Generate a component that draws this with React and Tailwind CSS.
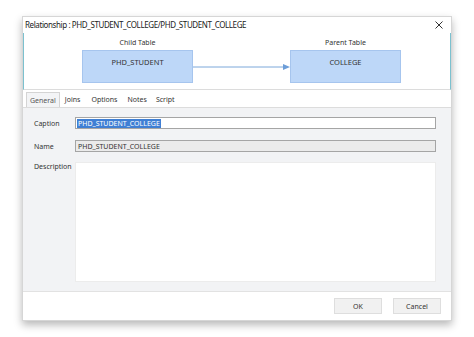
export default function App() {
  const font = { fontFamily: '"Noto Sans", "Liberation Sans", sans-serif' };
  return (
    <div className="w-[474px] h-[337px] bg-white overflow-hidden" style={font}>
      <div className="ml-[22px] mt-[16px] w-[430px] h-[305px] bg-white flex flex-col shadow-[0_4px_8px_rgba(0,0,0,0.28)] border border-[#d6d6d6]">
        {/* title bar */}
        <div className="h-[16px] flex items-center justify-between pl-[2px] pr-[6px] text-[8px] tracking-[-0.4px] text-[#222] leading-none">
          <span>Relationship : PHD_STUDENT_COLLEGE/PHD_STUDENT_COLLEGE</span>
          <svg width="8" height="8" viewBox="0 0 8 8" className="mr-[2px]">
            <path d="M0.5 0.5 L7.5 7.5 M7.5 0.5 L0.5 7.5" stroke="#333" strokeWidth="1" />
          </svg>
        </div>
        {/* diagram */}
        <div className="h-[57px] border-l border-r border-[#7cc1cf] border-b border-b-[#dcdcdc] flex items-start pl-[58px] text-[7px] text-[#333] leading-none">
          <div className="flex flex-col items-center w-[111px]">
            <div className="h-[17px] flex items-center pt-[2px]">Child Table</div>
            <div className="w-[111px] h-[33px] bg-[#bdd7f8] border border-[#a6c5ee] flex justify-center pt-[8px] text-[7.5px]">PHD_STUDENT</div>
          </div>
          <div className="w-[97px] h-[50px] flex items-start pt-[30px]">
            <svg width="97" height="8" viewBox="0 0 97 8">
              <line x1="0" y1="4" x2="90" y2="4" stroke="#7da8da" strokeWidth="1" />
              <path d="M90 1 L97 4 L90 7 Z" fill="#6d9ed8" />
            </svg>
          </div>
          <div className="flex flex-col items-center w-[111px]">
            <div className="h-[17px] flex items-center pt-[2px]">Parent Table</div>
            <div className="w-[111px] h-[33px] bg-[#bdd7f8] border border-[#a6c5ee] flex justify-center pt-[8px] text-[7.5px]">COLLEGE</div>
          </div>
        </div>
        {/* tabs */}
        <div className="h-[17px] flex items-end pl-[3px] text-[7px] text-[#333] leading-none bg-white">
          <div className="h-[15px] px-[3px] flex items-center border border-b-0 border-[#d4d4d4] bg-[#f3f4f6] text-[#555]">General</div>
          <div className="h-[15px] ml-[5px] flex items-center">Joins</div>
          <div className="h-[15px] ml-[11px] flex items-center">Options</div>
          <div className="h-[15px] ml-[10px] flex items-center">Notes</div>
          <div className="h-[15px] ml-[9px] flex items-center">Script</div>
        </div>
        {/* panel */}
        <div className="h-[185px] bg-[#f2f3f5] border-t border-[#dcdcdc] border-b border-b-[#e2e2e2] pt-[9px] pl-[11px] pr-[15px] text-[7px] text-[#333] leading-none">
          <div className="flex items-center h-[12px]">
            <span className="w-[41px]">Caption</span>
            <div className="flex-1 h-[12px] bg-white border border-[#a5a5a5] flex items-center pl-[1px]">
              <span className="bg-[#3f7fd4] text-white px-[1px] h-[9px] flex items-center">PHD_STUDENT_COLLEGE</span>
            </div>
          </div>
          <div className="flex items-center h-[12px] mt-[11px]">
            <span className="w-[41px]">Name</span>
            <div className="flex-1 h-[12px] bg-[#ebebeb] border border-[#a5a5a5] flex items-center pl-[2px]">PHD_STUDENT_COLLEGE</div>
          </div>
          <div className="flex items-start mt-[10px]">
            <span className="w-[41px] pt-[1px]">Description</span>
            <div className="flex-1 h-[120px] bg-white border border-[#ececec]"></div>
          </div>
        </div>
        {/* footer */}
        <div className="flex-1 flex justify-end items-start pt-[6px] pr-[10px] gap-[11px] text-[7px] text-[#333] leading-none">
          <div className="w-[48px] h-[16px] bg-[#f1f1f1] border border-[#dedede] flex items-center justify-center">OK</div>
          <div className="w-[48px] h-[16px] bg-[#f1f1f1] border border-[#dedede] flex items-center justify-center">Cancel</div>
        </div>
      </div>
    </div>
  );
}
